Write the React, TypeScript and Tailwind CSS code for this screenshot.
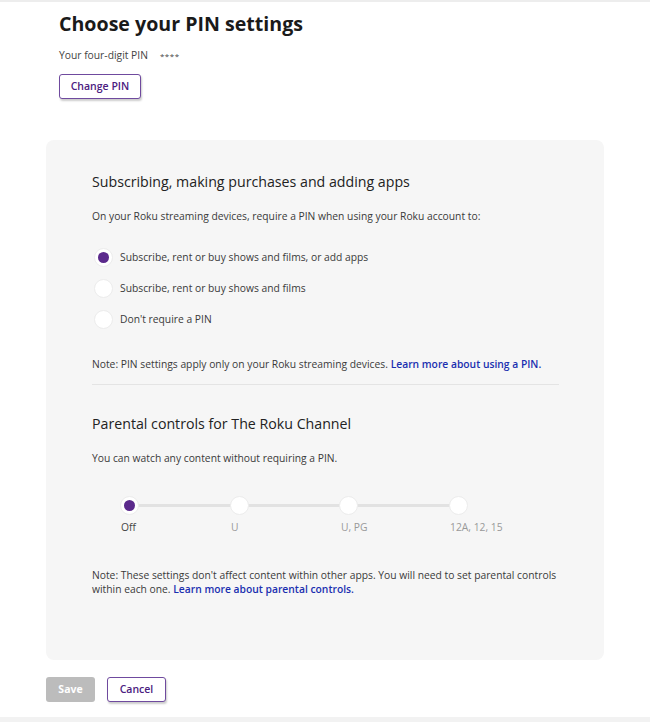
import { useState } from "react";

const font = { fontFamily: '"Open Sans", "Liberation Sans", sans-serif' };

function Radio({ checked, label, onClick }: { checked: boolean; label: string; onClick: () => void }) {
  return (
    <button onClick={onClick} className="flex items-center gap-[7px] text-left">
      <span className="w-[19px] h-[19px] rounded-full bg-white border border-[#ececec] flex items-center justify-center">
        {checked && <span className="w-[11px] h-[11px] rounded-full bg-[#5b2a8c]" />}
      </span>
      <span className="text-[10.3px] text-[#3a3a3a]">{label}</span>
    </button>
  );
}

const levels = ["Off", "U", "U, PG", "12A, 12, 15"];

export default function App() {
  const [pinOption, setPinOption] = useState(0);
  const [level, setLevel] = useState(0);

  return (
    <div className="w-[650px] h-[722px] bg-white flex flex-col overflow-hidden" style={font}>
      <div className="h-[2px] bg-[#ededed]" />
      <div className="flex-1 px-[46px]">
        {/* Header */}
        <div className="pl-[13px] pt-[8px]">
          <h1 className="text-[19.6px] font-bold text-[#1a1a1a] leading-[28px]">Choose your PIN settings</h1>
          <div className="mt-[10px] flex items-center gap-[12px] text-[10.3px] text-[#444]">
            <span>Your four-digit PIN</span>
            <span className="text-[8px] tracking-[0.5px]">****</span>
          </div>
          <button className="mt-[11px] w-[82px] h-[25px] bg-white border border-[#6f4a9e] rounded-[3px] shadow-[1px_2px_2px_rgba(0,0,0,0.2)] text-[10.5px] font-semibold text-[#4b2080]">
            Change PIN
          </button>
        </div>

        {/* Panel */}
        <div className="mt-[41px] h-[520px] bg-[#f6f6f6] rounded-[8px] px-[46px] pt-[32px]">
          <div className="w-[467px] text-[10.3px] leading-[15px] text-[#3a3a3a]">
            <h2 className="text-[14.2px] text-[#222] leading-[20px]">Subscribing, making purchases and adding apps</h2>
            <p className="mt-[17px]">On your Roku streaming devices, require a PIN when using your Roku account to:</p>
            <div className="mt-[24px] flex flex-col gap-[12px] pl-[2px]">
              {["Subscribe, rent or buy shows and films, or add apps", "Subscribe, rent or buy shows and films", "Don't require a PIN"].map(
                (label, i) => (
                  <Radio key={i} checked={pinOption === i} label={label} onClick={() => setPinOption(i)} />
                )
              )}
            </div>
            <p className="mt-[28px]">
              Note: PIN settings apply only on your Roku streaming devices.{" "}
              <a href="#" className="text-[#1a2fb0] font-semibold">Learn more about using a PIN.</a>
            </p>
            <div className="mt-[12px] h-px bg-[#e4e4e4]" />

            <h2 className="mt-[29px] text-[14.2px] text-[#222] leading-[20px]">Parental controls for The Roku Channel</h2>
            <p className="mt-[17px]">You can watch any content without requiring a PIN.</p>

            {/* Slider */}
            <div className="mt-[30px] pl-[28px]">
              <div className="relative h-[19px] w-[348px]">
                <div className="absolute left-[9px] right-[9px] top-[8px] h-[3px] bg-[#e2e2e2]" />
                <div className="relative w-full flex justify-between">
                  {levels.map((l, i) => (
                    <button
                      key={l}
                      onClick={() => setLevel(i)}
                      className="w-[19px] h-[19px] rounded-full bg-white border border-[#ececec] flex items-center justify-center"
                    >
                      {level === i && <span className="w-[11px] h-[11px] rounded-full bg-[#5b2a8c]" />}
                    </button>
                  ))}
                </div>
              </div>
              <div className="mt-[5px] grid grid-cols-[110px_110px_109px_auto] pl-[1px]">
                {levels.map((l, i) => (
                  <span key={l} className={level === i ? "text-[#444]" : "text-[#999]"}>{l}</span>
                ))}
              </div>
            </div>

            <p className="mt-[33px] w-[470px] leading-[14px]">
              Note: These settings don't affect content within other apps. You will need to set parental controls within each one.{" "}
              <a href="#" className="text-[#1a2fb0] font-semibold">Learn more about parental controls.</a>
            </p>
          </div>
        </div>

        {/* Actions */}
        <div className="mt-[17px] flex gap-[12px]">
          <button className="w-[49px] h-[25px] rounded-[3px] bg-[#bcbcbc] text-white text-[10.5px] font-bold">Save</button>
          <button className="w-[59px] h-[25px] rounded-[3px] bg-white border border-[#6f4a9e] shadow-[1px_2px_2px_rgba(0,0,0,0.2)] text-[10.5px] font-semibold text-[#4b2080]">
            Cancel
          </button>
        </div>
      </div>
      <div className="h-[5px] bg-[#f2f2f2]" />
    </div>
  );
}
